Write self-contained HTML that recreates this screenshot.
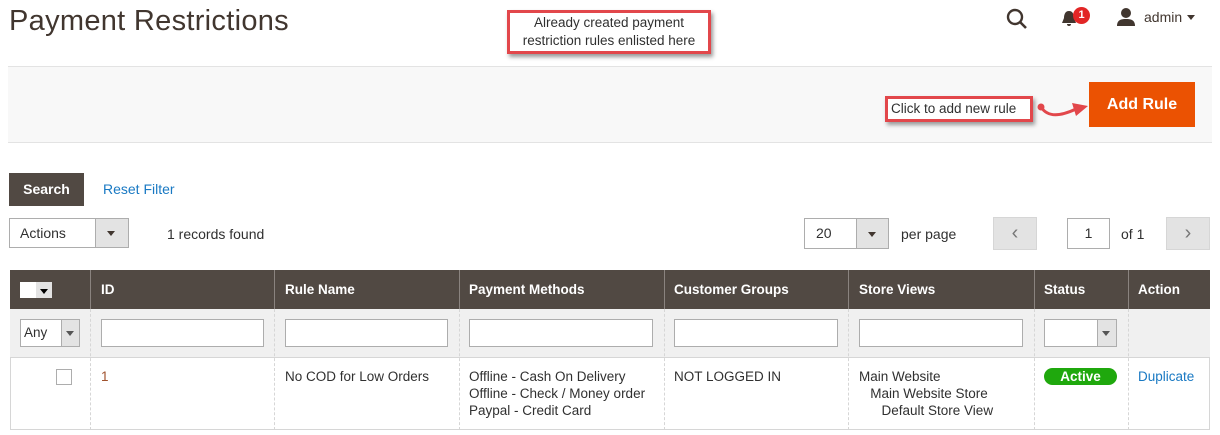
<!DOCTYPE html>
<html><head><style>
*{box-sizing:border-box;margin:0;padding:0}
body{width:1220px;height:435px;background:#fff;font-family:"Liberation Sans",sans-serif;color:#303030;position:relative;overflow:hidden;font-size:14px}
.a{position:absolute}
.hd{background:#514943;color:#fff;font-weight:bold;font-size:13.5px}
.inp{position:absolute;height:28px;border:1px solid #adadad;background:#fff}
.cell{position:absolute;font-size:13.5px;line-height:17px;color:#303030}
.vl{position:absolute;border-left:1px dashed #d6d6d6}
</style></head><body>
<div class="a" style="left:9px;top:5px;font-size:29px;color:#41362f;letter-spacing:0.3px">Payment Restrictions</div>
<div class="a" style="left:507px;top:10px;width:204px;height:44px;border:3px solid #e2474b;box-shadow:2px 3px 4px #999;font-size:13.5px;text-align:center;line-height:18px;padding-top:1px;background:#fff">Already created payment restriction rules enlisted here</div>
<svg class="a" style="left:1006px;top:8px" width="22" height="22" viewBox="0 0 22 22"><circle cx="9" cy="9" r="7" fill="none" stroke="#41362f" stroke-width="2.4"/><line x1="14" y1="14" x2="20" y2="20" stroke="#41362f" stroke-width="2.6"/></svg>
<svg class="a" style="left:1061px;top:10px" width="16" height="18" viewBox="0 0 16 18"><path d="M8 1C4 1 3 5 3 8L1 13H15L13 8C13 5 12 1 8 1Z M6 14a2 2 0 0 0 4 0Z" fill="#41362f"/></svg>
<div class="a" style="left:1073px;top:7px;width:17px;height:17px;border-radius:50%;background:#e22626;color:#fff;font-size:11px;font-weight:bold;text-align:center;line-height:17px">1</div>
<svg class="a" style="left:1116px;top:7px" width="20" height="20" viewBox="0 0 20 20"><circle cx="10" cy="6" r="5" fill="#41362f"/><path d="M1 19C1 13 5 12 10 12S19 13 19 19Z" fill="#41362f"/></svg>
<div class="a" style="left:1144px;top:9px;font-size:14px;color:#41362f">admin</div>
<div class="a" style="left:1187px;top:15px;border:4px solid transparent;border-top:5px solid #41362f"></div>
<div class="a" style="left:8px;top:66px;width:1204px;height:77px;background:#f8f8f8;border-top:1px solid #e3e3e3;border-bottom:1px solid #e3e3e3"></div>
<div class="a" style="left:885px;top:96px;width:148px;height:26px;border:3px solid #e2474b;background:#fff;box-shadow:2px 3px 4px #999;font-size:13.5px;line-height:19px;padding-left:3px">Click to add new rule</div>
<svg class="a" style="left:1036px;top:98px" width="56" height="22" viewBox="0 0 56 22"><circle cx="5" cy="9" r="3.5" fill="#e2474b"/><path d="M5 9C12 20 25 18 40 11" fill="none" stroke="#e2474b" stroke-width="3"/><path d="M36 5L52 8L40 18Z" fill="#e2474b"/></svg>
<div class="a" style="left:1089px;top:82px;width:106px;height:45px;background:#eb5202;color:#fff;font-weight:bold;font-size:16px;text-align:center;line-height:45px">Add Rule</div>
<div class="a" style="left:9px;top:173px;width:75px;height:33px;background:#514943;color:#fff;font-weight:bold;font-size:14px;text-align:center;line-height:33px">Search</div>
<div class="a" style="left:103px;top:181px;color:#1979c3;font-size:14px">Reset Filter</div>
<div class="a" style="left:9px;top:218px;width:120px;height:30px;border:1px solid #adadad;background:#fff;font-size:14px;line-height:28px;padding-left:10px">Actions</div>
<div class="a" style="left:95px;top:219px;width:33px;height:28px;background:#e3e3e3;border-left:1px solid #adadad"></div>
<div class="a" style="left:107px;top:231px;border:4px solid transparent;border-top:5px solid #41362f"></div>
<div class="a" style="left:167px;top:226px;font-size:14px">1 records found</div>
<div class="a" style="left:804px;top:218px;width:85px;height:31px;border:1px solid #adadad;font-size:14px;line-height:29px;padding-left:11px">20</div>
<div class="a" style="left:856px;top:219px;width:32px;height:29px;background:#e3e3e3;border-left:1px solid #adadad"></div>
<div class="a" style="left:868px;top:232px;border:4px solid transparent;border-top:5px solid #41362f"></div>
<div class="a" style="left:901px;top:226px;font-size:14px">per page</div>
<div class="a" style="left:993px;top:217px;width:44px;height:33px;background:#e3e3e3;border:1px solid #d6d6d6;color:#777;text-align:center;line-height:31px;font-size:20px">‹</div>
<div class="a" style="left:1067px;top:218px;width:43px;height:31px;border:1px solid #adadad;text-align:center;line-height:29px">1</div>
<div class="a" style="left:1121px;top:226px">of 1</div>
<div class="a" style="left:1166px;top:217px;width:44px;height:33px;background:#e3e3e3;border:1px solid #d6d6d6;color:#777;text-align:center;line-height:31px;font-size:20px">›</div>
<div class="a hd" style="left:10px;top:270px;width:1200px;height:39px"></div>
<div class="a" style="left:10px;top:309px;width:1200px;height:49px;background:#f0f0f0"></div>
<div class="a" style="left:10px;top:358px;width:1200px;height:72px;border-left:1px solid #d6d6d6;border-right:1px solid #d6d6d6;border-bottom:1px solid #d6d6d6"></div>
<div class="a" style="left:20px;top:282px;width:16px;height:16px;background:#fff"></div>
<div class="a" style="left:36px;top:282px;width:16px;height:16px;background:#e3e3e3"></div>
<div class="a" style="left:40px;top:289px;border:4px solid transparent;border-top:5px solid #000"></div>
<div class="a hd" style="left:101px;top:282px;background:none">ID</div>
<div class="a hd" style="left:285px;top:282px;background:none">Rule Name</div>
<div class="a hd" style="left:469px;top:282px;background:none">Payment Methods</div>
<div class="a hd" style="left:674px;top:282px;background:none">Customer Groups</div>
<div class="a hd" style="left:859px;top:282px;background:none">Store Views</div>
<div class="a hd" style="left:1044px;top:282px;background:none">Status</div>
<div class="a hd" style="left:1138px;top:282px;background:none">Action</div>
<div class="a" style="left:90px;top:270px;height:39px;border-left:1px solid #8a837f"></div>
<div class="a" style="left:274px;top:270px;height:39px;border-left:1px solid #8a837f"></div>
<div class="a" style="left:459px;top:270px;height:39px;border-left:1px solid #8a837f"></div>
<div class="a" style="left:664px;top:270px;height:39px;border-left:1px solid #8a837f"></div>
<div class="a" style="left:848px;top:270px;height:39px;border-left:1px solid #8a837f"></div>
<div class="a" style="left:1034px;top:270px;height:39px;border-left:1px solid #8a837f"></div>
<div class="a" style="left:1128px;top:270px;height:39px;border-left:1px solid #8a837f"></div>
<div class="vl" style="left:90px;top:309px;height:121px"></div>
<div class="vl" style="left:274px;top:309px;height:121px"></div>
<div class="vl" style="left:459px;top:309px;height:121px"></div>
<div class="vl" style="left:664px;top:309px;height:121px"></div>
<div class="vl" style="left:848px;top:309px;height:121px"></div>
<div class="vl" style="left:1034px;top:309px;height:121px"></div>
<div class="vl" style="left:1128px;top:309px;height:121px"></div>
<div class="a" style="left:10px;top:357px;width:1200px;border-top:1px solid #d6d6d6"></div>
<div class="inp" style="left:20px;top:319px;width:60px;font-size:13.5px;line-height:26px;padding-left:3px">Any</div>
<div class="a" style="left:61px;top:320px;width:18px;height:26px;background:#e3e3e3;border-left:1px solid #adadad"></div>
<div class="a" style="left:66px;top:331px;border:4px solid transparent;border-top:5px solid #555"></div>
<div class="inp" style="left:101px;top:319px;width:163px"></div>
<div class="inp" style="left:285px;top:319px;width:163px"></div>
<div class="inp" style="left:469px;top:319px;width:184px"></div>
<div class="inp" style="left:674px;top:319px;width:164px"></div>
<div class="inp" style="left:859px;top:319px;width:164px"></div>
<div class="inp" style="left:1044px;top:319px;width:73px"></div>
<div class="a" style="left:1097px;top:320px;width:19px;height:26px;background:#e3e3e3;border-left:1px solid #adadad"></div>
<div class="a" style="left:1102px;top:331px;border:4px solid transparent;border-top:5px solid #555"></div>
<div class="a" style="left:56px;top:369px;width:16px;height:16px;border:1px solid #adadad;background:#fff"></div>
<div class="cell" style="left:101px;top:368px;color:#a0522d">1</div>
<div class="cell" style="left:285px;top:368px">No COD for Low Orders</div>
<div class="cell" style="left:469px;top:368px">Offline - Cash On Delivery<br>Offline - Check / Money order<br>Paypal - Credit Card</div>
<div class="cell" style="left:674px;top:368px">NOT LOGGED IN</div>
<div class="cell" style="left:859px;top:368px">Main Website<br>&nbsp;&nbsp;&nbsp;Main Website Store<br>&nbsp;&nbsp;&nbsp;&nbsp;&nbsp;&nbsp;Default Store View</div>
<div class="a" style="left:1044px;top:368px;width:73px;height:17px;background:#1fa80d;color:#fff;font-weight:bold;font-size:13.5px;text-align:center;line-height:17px;border-radius:9px">Active</div>
<div class="cell" style="left:1138px;top:368px;color:#1979c3">Duplicate</div>
</body></html>
